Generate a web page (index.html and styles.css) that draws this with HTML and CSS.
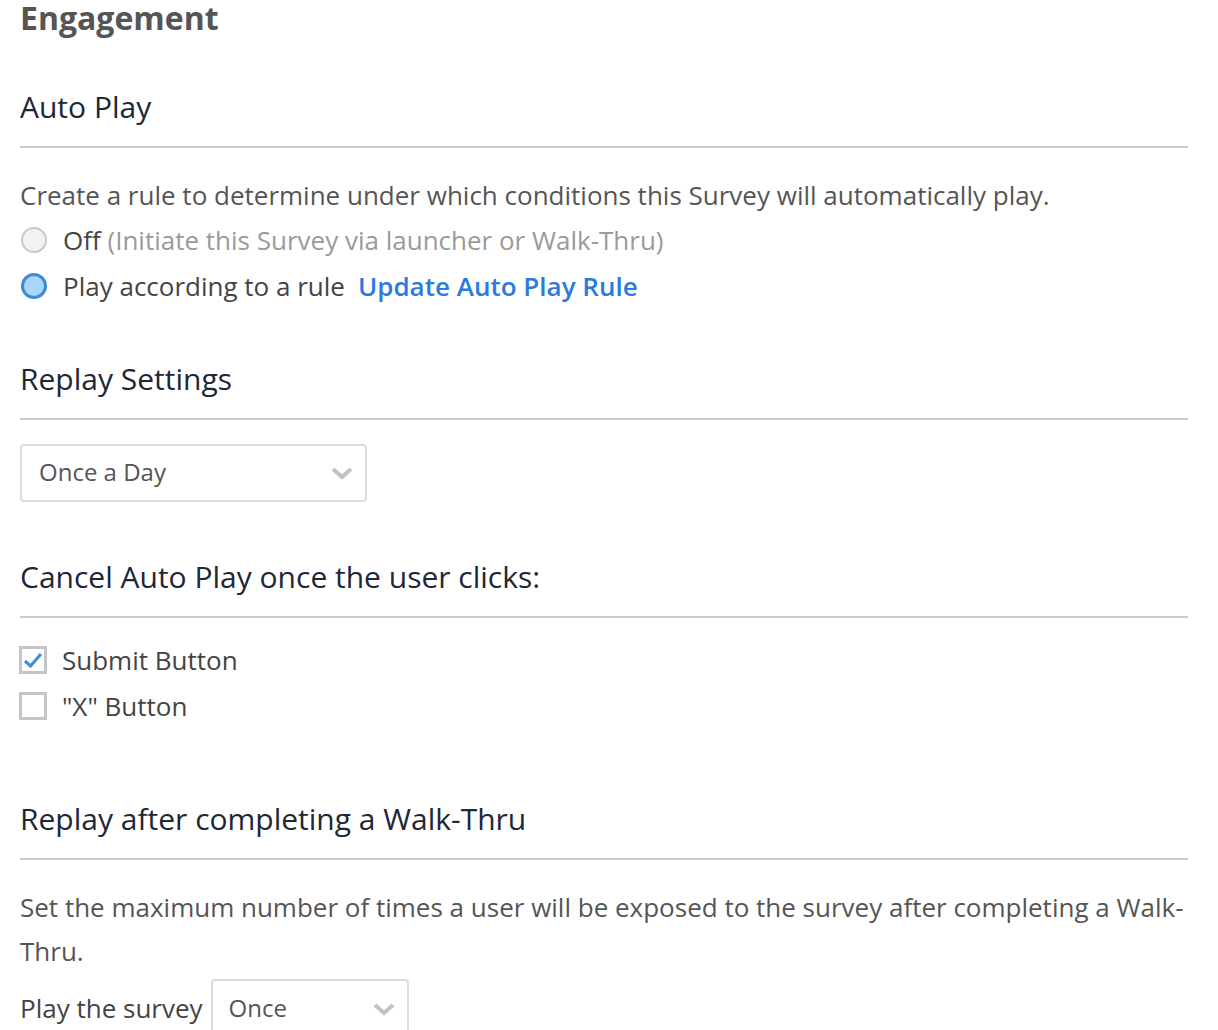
FILE: index.html
```html
<!DOCTYPE html>
<html lang="en-us">

<head>
  <meta http-equiv="Content-Type" content="text/html; charset=UTF-8">
  <title>Engagement</title>
  <link rel="stylesheet" href="styles.css">
</head>

<body>
  <div class="page">
    <h1 class="page-title">Engagement</h1>

    <h2 class="section-title">Auto Play</h2>
    <p class="help">Create a rule to determine under which conditions this Survey will automatically play.</p>
    <div class="option">
      <span class="radio"></span>
      <span class="label">Off <span class="muted">(Initiate this Survey via launcher or Walk-Thru)</span></span>
    </div>
    <div class="option">
      <span class="radio checked"></span>
      <span class="label">Play according to a rule</span>
      <a class="link" href="#">Update Auto Play Rule</a>
    </div>

    <h2 class="section-title">Replay Settings</h2>
    <div class="dropdown replay">
      <span>Once a Day</span>
      <svg class="chevron" width="22" height="14" viewBox="0 0 22 14"><path d="M2 3 L11 11 L20 3" fill="none" stroke="#c2c2c2" stroke-width="4"/></svg>
    </div>

    <h2 class="section-title after-select">Cancel Auto Play once the user clicks:</h2>
    <div class="option check-row first">
      <span class="checkbox">
        <svg width="22" height="22" viewBox="0 0 22 22"><path d="M3 12 L8.5 17 L19 5" fill="none" stroke="#4090dc" stroke-width="3.2"/></svg>
      </span>
      <span class="label">Submit Button</span>
    </div>
    <div class="option check-row">
      <span class="checkbox"></span>
      <span class="label">"X" Button</span>
    </div>

    <h2 class="section-title spaced">Replay after completing a Walk-Thru</h2>
    <p class="help">Set the maximum number of times a user will be exposed to the survey after completing a Walk-Thru.</p>
    <div class="play-row">
      <span class="label">Play the survey</span>
      <div class="dropdown times">
        <span>Once</span>
        <svg class="chevron" width="22" height="14" viewBox="0 0 22 14"><path d="M2 3 L11 11 L20 3" fill="none" stroke="#c2c2c2" stroke-width="4"/></svg>
      </div>
    </div>
  </div>
</body>

</html>
```

FILE: styles.css
```css
body {
  font-family: "Open Sans", "DejaVu Sans", sans-serif;
  background: #fff;
  margin: 0;
  padding: 0;
  color: #555;
}

.page {
  margin: 0 30px 0 20px;
}

.page-title {
  font-size: 32px;
  font-weight: 700;
  color: #555;
  line-height: 36px;
  margin: 0;
}

.section-title {
  font-size: 30px;
  font-weight: 400;
  color: #1d2736;
  line-height: 40px;
  margin: 50px 0 0;
  padding-bottom: 19px;
  border-bottom: 2px solid #cbcbcb;
}

.page-title + .section-title {
  margin-top: 51px;
}

.section-title.after-select {
  margin-top: 55px;
}

.section-title.spaced {
  margin-top: 70px;
}

.help {
  font-size: 26px;
  line-height: 44px;
  margin: 25px 0 0;
  color: #555;
}

.option {
  display: flex;
  align-items: center;
  height: 46px;
  font-size: 26px;
  color: #444;
}

.label {
  font-size: 26px;
  color: #444;
}

.muted {
  color: #9a9a9a;
}

.radio {
  width: 22px;
  height: 22px;
  border: 2px solid #c8c8c8;
  background: #f2f2f2;
  border-radius: 50%;
  margin: 0 16px 0 1px;
  flex-shrink: 0;
}

.radio.checked {
  width: 20px;
  height: 20px;
  border: 3px solid #3d8ad6;
  background: #a9d7fb;
}

.link {
  color: #2b7ade;
  font-weight: 600;
  text-decoration: none;
  margin-left: 13px;
}

.dropdown {
  display: flex;
  align-items: center;
  justify-content: space-between;
  box-sizing: border-box;
  height: 58px;
  border: 2px solid #dcdcdc;
  border-radius: 4px;
  font-size: 24px;
  color: #555;
  padding: 0 12px 3px 17px;
  background: #fff;
}

.dropdown .chevron {
  margin-top: 3px;
}

.dropdown.replay {
  width: 347px;
  margin-top: 24px;
}

.check-row.first {
  margin-top: 19px;
}

.checkbox {
  display: flex;
  align-items: center;
  justify-content: center;
  width: 22px;
  height: 22px;
  border: 3px solid #c5c5c5;
  background: #fff;
  margin: 0 15px 0 -1px;
  flex-shrink: 0;
}

.play-row {
  display: flex;
  align-items: center;
  margin-top: 6px;
}

.play-row .label {
  color: #444;
  margin-right: 8px;
}

.dropdown.times {
  width: 198px;
  border-bottom: none;
  border-radius: 4px 4px 0 0;
  padding-left: 16px;
}
```
